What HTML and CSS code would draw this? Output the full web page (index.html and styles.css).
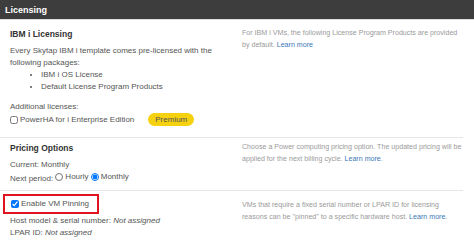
FILE: index.html
```html
<!DOCTYPE html>
<html lang="en">
  <head>
    <meta charset="UTF-8" />
    <title>Licensing</title>
    <link rel="stylesheet" href="styles.css">
  </head>
  <body>
    <div class="panel">
      <div class="panel-header">Licensing</div>

      <div class="section first">
        <div class="main">
          <h2>IBM i Licensing</h2>
          <p>Every Skytap IBM i template comes pre-licensed with the following packages:</p>
          <ul>
            <li>IBM i OS License</li>
            <li>Default License Program Products</li>
          </ul>
          <p class="extra">Additional licenses:</p>
          <div class="option-row">
            <label><input type="checkbox" /> PowerHA for i Enterprise Edition</label>
            <span class="badge">Premium</span>
          </div>
        </div>
        <div class="help">
          For IBM i VMs, the following License Program Products are provided<br />
          by default. <a href="#">Learn more</a>
        </div>
      </div>

      <div class="section pricing">
        <div class="main">
          <h2>Pricing Options</h2>
          <p>Current: Monthly</p>
          <p class="radios">
            Next period:
            <label><input type="radio" name="period" /> Hourly</label>
            <label><input type="radio" name="period" checked /> Monthly</label>
          </p>
        </div>
        <div class="help">
          Choose a Power computing pricing option. The updated pricing will be<br />
          applied for the next billing cycle. <a href="#">Learn more</a>.
        </div>
      </div>

      <div class="section last">
        <div class="main">
          <label class="pinning"><input type="checkbox" checked /> Enable VM Pinning</label>
          <p>Host model &amp; serial number: <em>Not assigned</em></p>
          <p>LPAR ID: <em>Not assigned</em></p>
        </div>
        <div class="help">
          VMs that require a fixed serial number or LPAR ID for licensing<br />
          reasons can be "pinned" to a specific hardware host. <a href="#">Learn more</a>.
        </div>
      </div>
    </div>
  </body>
</html>
```

FILE: styles.css
```css
* {
  margin: 0;
  padding: 0;
  box-sizing: border-box;
}

body {
  font-family: "Liberation Sans", Arial, sans-serif;
  font-size: 8px;
  color: #555;
  background-color: #fff;
}

.panel-header {
  background-color: #3d3d3d;
  color: #fff;
  font-weight: bold;
  font-size: 9px;
  height: 20px;
  line-height: 20px;
  padding-left: 5px;
  border-bottom: 1px solid #ddd;
}

.section {
  display: grid;
  grid-template-columns: 232px 1fr;
  width: 463px;
  border-bottom: 1px solid #e6e6e6;
}

.section.first {
  padding: 7px 0 11px;
}

.section.pricing {
  padding: 3px 0 5px;
}

.section.last {
  border-bottom: none;
  padding: 3px 0 6px;
}

.main {
  padding-left: 10px;
  line-height: 12px;
}

h2 {
  font-size: 8.5px;
  font-weight: bold;
  color: #333;
  margin: 1px 0 5px;
}

ul {
  list-style: disc;
  padding-left: 31px;
}

.extra {
  margin-top: 8px;
}

.option-row {
  display: flex;
  align-items: center;
  gap: 14px;
}

label {
  display: inline-flex;
  align-items: center;
  gap: 2px;
}

input[type="checkbox"],
input[type="radio"] {
  width: 8px;
  height: 8px;
  margin: 0;
}

.badge {
  background-color: #f5d10f;
  color: #555;
  border-radius: 7px;
  padding: 1px 7px;
  line-height: 11px;
}

.help {
  padding-left: 10px;
  color: #9a9a9a;
  line-height: 12px;
  font-size: 7.1px;
  white-space: nowrap;
}

.last .help {
  padding-top: 5px;
}

.help a {
  color: #3a78b8;
  text-decoration: none;
}

.pinning {
  border: 2px solid #e0141e;
  padding: 2px 8px 2px 6px;
  margin: 0 0 1px -7px;
}

em {
  font-style: italic;
}
```
